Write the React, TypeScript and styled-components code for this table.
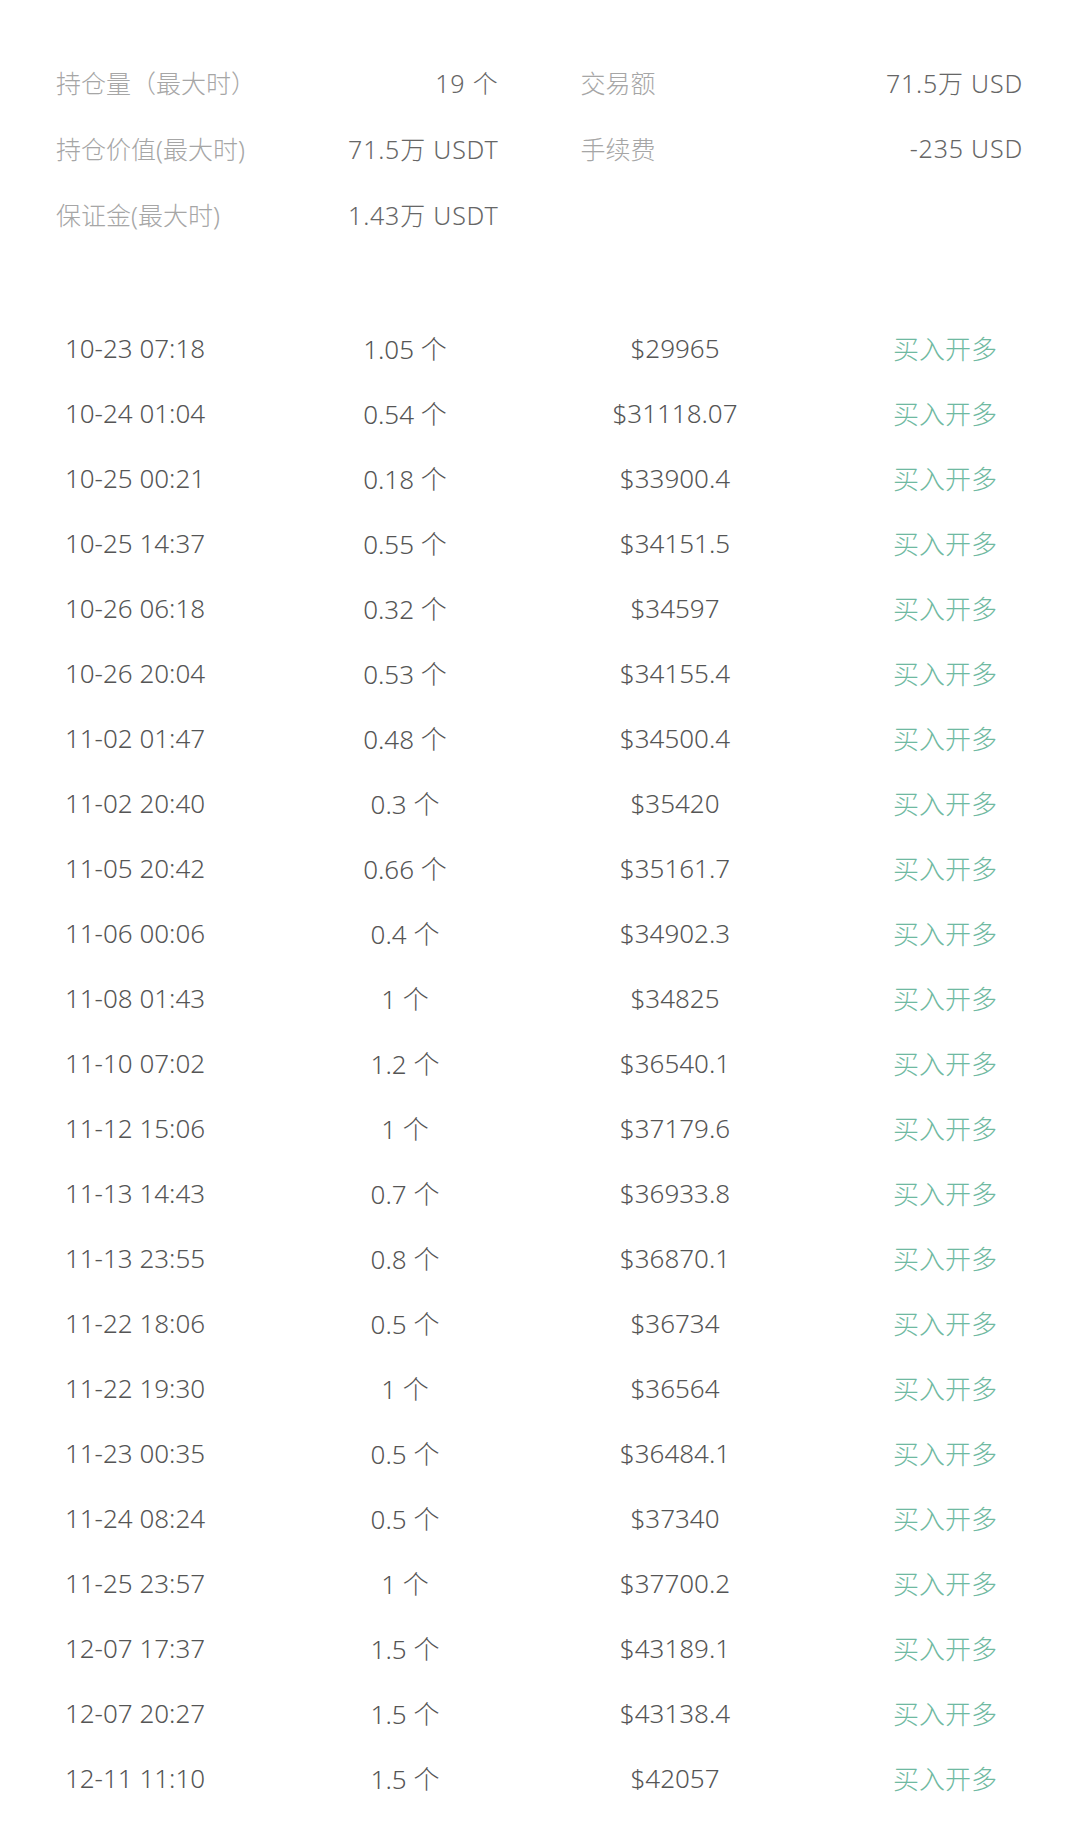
import React from "react";
import styled, { createGlobalStyle } from "styled-components";

const GlobalStyle = createGlobalStyle`
  body {
    margin: 0;
    background: #ffffff;
    font-family: "Noto Sans", "Noto Sans CJK SC", sans-serif;
  }
`;

const Page = styled.div`
  width: 1080px;
  min-height: 1822px;
  background: #ffffff;
`;

const Summary = styled.section`
  display: grid;
  grid-template-columns: 1fr 1fr;
  column-gap: 82px;
  padding: 49px 57px 0 56px;
`;

const StatRow = styled.div`
  display: flex;
  justify-content: space-between;
  align-items: center;
  height: 66px;
  font-size: 25px;
  font-weight: 300;
`;

const StatLabel = styled.span`
  color: #a6a6a6;
`;

const StatValue = styled.span`
  color: #666666;
  letter-spacing: 0.8px;
`;

const Trades = styled.section`
  margin-top: 68px;
`;

const TradeRow = styled.div`
  display: grid;
  grid-template-columns: repeat(4, 1fr);
  align-items: center;
  height: 65px;
  font-size: 26px;
  font-weight: 300;
`;

const Cell = styled.span<{ $accent?: boolean }>`
  text-align: center;
  color: ${(p) => (p.$accent ? "#6fb9a1" : "#555555")};
`;

const stats: [string, string][][] = [
  [
    ["持仓量（最大时）", "19 个"],
    ["持仓价值(最大时)", "71.5万 USDT"],
    ["保证金(最大时)", "1.43万 USDT"],
  ],
  [
    ["交易额", "71.5万 USD"],
    ["手续费", "-235 USD"],
  ],
];

const trades: [string, string, string][] = [
  ["10-23 07:18", "1.05", "$29965"],
  ["10-24 01:04", "0.54", "$31118.07"],
  ["10-25 00:21", "0.18", "$33900.4"],
  ["10-25 14:37", "0.55", "$34151.5"],
  ["10-26 06:18", "0.32", "$34597"],
  ["10-26 20:04", "0.53", "$34155.4"],
  ["11-02 01:47", "0.48", "$34500.4"],
  ["11-02 20:40", "0.3", "$35420"],
  ["11-05 20:42", "0.66", "$35161.7"],
  ["11-06 00:06", "0.4", "$34902.3"],
  ["11-08 01:43", "1", "$34825"],
  ["11-10 07:02", "1.2", "$36540.1"],
  ["11-12 15:06", "1", "$37179.6"],
  ["11-13 14:43", "0.7", "$36933.8"],
  ["11-13 23:55", "0.8", "$36870.1"],
  ["11-22 18:06", "0.5", "$36734"],
  ["11-22 19:30", "1", "$36564"],
  ["11-23 00:35", "0.5", "$36484.1"],
  ["11-24 08:24", "0.5", "$37340"],
  ["11-25 23:57", "1", "$37700.2"],
  ["12-07 17:37", "1.5", "$43189.1"],
  ["12-07 20:27", "1.5", "$43138.4"],
  ["12-11 11:10", "1.5", "$42057"],
];

export default function App() {
  return (
    <>
      <GlobalStyle />
      <Page>
        <Summary>
          {stats.map((col, i) => (
            <div key={i}>
              {col.map(([label, value]) => (
                <StatRow key={label}>
                  <StatLabel>{label}</StatLabel>
                  <StatValue>{value}</StatValue>
                </StatRow>
              ))}
            </div>
          ))}
        </Summary>
        <Trades>
          {trades.map(([time, amount, price]) => (
            <TradeRow key={time}>
              <Cell>{time}</Cell>
              <Cell>{amount} 个</Cell>
              <Cell>{price}</Cell>
              <Cell $accent>买入开多</Cell>
            </TradeRow>
          ))}
        </Trades>
      </Page>
    </>
  );
}
